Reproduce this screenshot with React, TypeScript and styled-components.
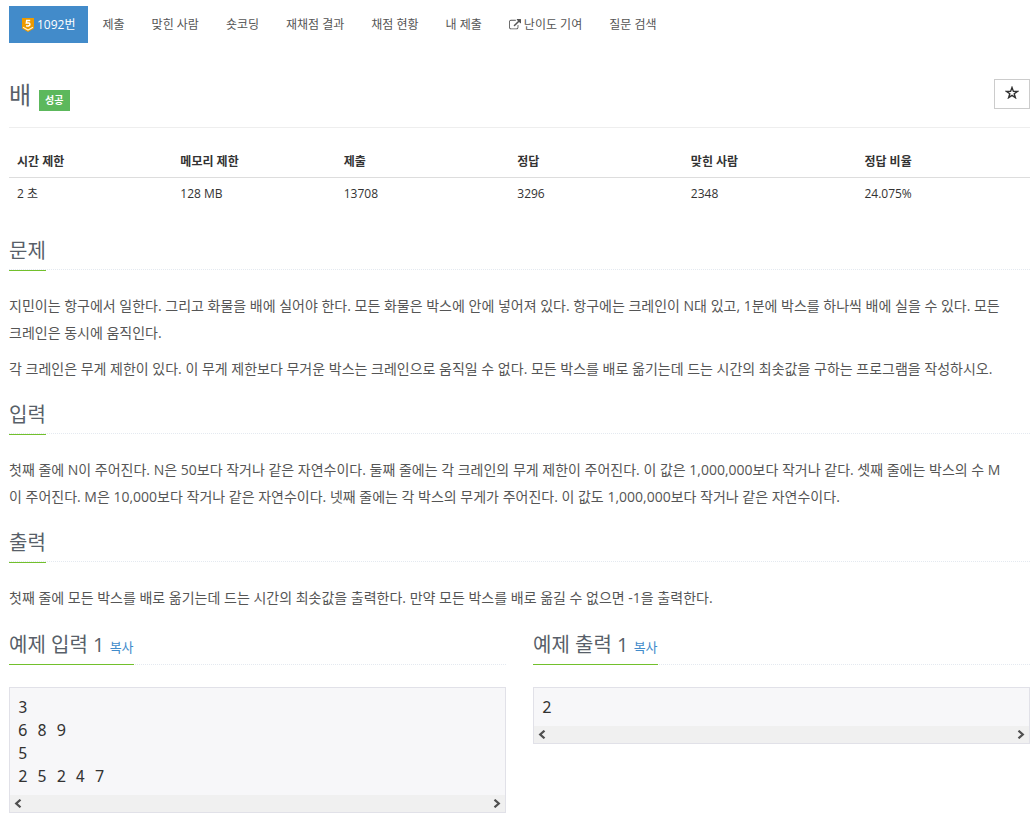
import React from "react";
import styled, { createGlobalStyle } from "styled-components";

const GlobalStyle = createGlobalStyle`
  *, *::before, *::after { box-sizing: border-box; }
  body {
    margin: 0;
    background: #fff;
    color: #333;
    font-family: "Open Sans", "Noto Sans CJK KR", sans-serif;
    font-size: 12px;
    line-height: 17px;
  }
`;

const Page = styled.main`
  padding: 6px 5px 6px 9px;
`;

const Nav = styled.nav`
  display: flex;
  flex-wrap: wrap;
  gap: 2px;
`;

const NavLink = styled.a<{ $active?: boolean }>`
  display: flex;
  align-items: center;
  gap: 3px;
  padding: 10px 12px 10px 13px;
  line-height: 17px;
  text-decoration: none;
  color: ${(p) => (p.$active ? "#fff" : "#555")};
  background: ${(p) => (p.$active ? "#428bca" : "transparent")};
`;

const TitleBar = styled.header`
  display: flex;
  justify-content: space-between;
  align-items: flex-start;
  margin-top: 33px;
  padding-bottom: 14px;
  border-bottom: 1px solid #eee;
`;

const TitleGroup = styled.div`
  display: flex;
  align-items: flex-end;
  gap: 8px;
`;

const Title = styled.h1`
  margin: 0;
  font-size: 24px;
  line-height: 37px;
  font-weight: 400;
  color: #585f69;
`;

const StatusLabel = styled.span`
  margin-bottom: 2px;
  padding: 2px 6px;
  background: #5cb85c;
  color: #fff;
  font-size: 10px;
  line-height: 17px;
  font-weight: 700;
`;

const StarButton = styled.button`
  display: flex;
  align-items: center;
  justify-content: center;
  width: 36px;
  height: 30px;
  margin-top: 3px;
  padding: 0 0 4px;
  border: 1px solid #ccc;
  background: #fff;
  cursor: pointer;
`;

const InfoTable = styled.table`
  width: 100%;
  margin-top: 17px;
  border-collapse: collapse;
  table-layout: fixed;
`;

const HeadCell = styled.th<{ $width: number }>`
  width: ${(p) => p.$width}%;
  padding: 9px 8px 7px;
  border-bottom: 1px solid #ddd;
  line-height: 16px;
  font-size: 12px;
  font-weight: 700;
  text-align: left;
`;

const Cell = styled.td`
  padding: 8px;
  line-height: 16px;
`;

const Section = styled.section<{ $space?: number }>`
  margin-top: ${(p) => p.$space ?? 18}px;
  min-width: 0;
`;

const Headline = styled.div<{ $overlap?: number }>`
  display: flex;
  margin-bottom: 22px;
  border-bottom: 1px dotted #e4e9f0;

  h2 {
    margin: 0 0 -${(p) => p.$overlap ?? 2}px;
    padding-bottom: 4px;
    border-bottom: 1px solid #72c02c;
    font-size: 20px;
    line-height: 30px;
    font-weight: 400;
    color: #585f69;
  }
`;

const CopyLink = styled.a`
  font-size: 13px;
  line-height: 17px;
  color: #428bca;
  text-decoration: none;
`;

const Text = styled.p`
  margin: 0;
  padding-right: 22px;
  font-size: 14px;
  line-height: 27px;
  color: #555;

  & + & {
    margin-top: 9px;
  }
`;

const Samples = styled.div`
  display: grid;
  grid-template-columns: 1fr 1fr;
  align-items: start;
  gap: 27px;
`;

const SampleBox = styled.div`
  border: 1px solid #e1e1e8;
  background: #f7f7f9;
`;

const SampleData = styled.pre`
  margin: 0;
  padding: 8px 8px 7px;
  font-family: "Noto Sans Mono", "DejaVu Sans Mono", monospace;
  font-size: 16px;
  line-height: 23px;
  color: #333;
`;

const ScrollTrack = styled.div`
  display: flex;
  justify-content: space-between;
  align-items: center;
  height: 17px;
  padding: 0 4px;
  background: #f0f0f0;
`;

const TierIcon = () => (
  <svg width="12" height="15" viewBox="0 0 12 15" aria-hidden="true">
    <path d="M0 1h12v10.500L6 15l-6-3.500z" fill="#ec9a00" />
    <path d="M1 10.300l5 2.700 5-2.700" fill="none" stroke="#fff3d0" strokeWidth="1.100" />
    <path d="M8.200 3.500H4.700L4.400 6.100q3.500-.7 3.500 1.300 0 2-3.800 1.300" fill="none" stroke="#fff" strokeWidth="1.500" />
  </svg>
);

const ExternalIcon = () => (
  <svg width="12" height="12" viewBox="0 0 1792 1792" fill="currentColor" aria-hidden="true">
    <path d="M1408 928v320q0 119-84.5 203.5t-203.5 84.5h-832q-119 0-203.5-84.5t-84.5-203.5v-832q0-119 84.5-203.5t203.5-84.5h704q14 0 23 9t9 23v64q0 14-9 23t-23 9h-704q-66 0-113 47t-47 113v832q0 66 47 113t113 47h832q66 0 113-47t47-113v-320q0-14 9-23t23-9h64q14 0 23 9t9 23zm384-864v512q0 26-19 45t-45 19-45-19l-176-176-652 652q-10 10-23 10t-23-10l-114-114q-10-10-10-23t10-23l652-652-176-176q-19-19-19-45t19-45 45-19h512q26 0 45 19t19 45z" />
  </svg>
);

const StarIcon = () => (
  <svg width="14" height="13" viewBox="0 0 14 13" aria-hidden="true">
    <path
      d="M7 1.500l1.400 3.900h4.100L9.200 7.800l1.200 3.900L7 9.400l-3.400 2.300 1.200-3.900L1.500 5.400h4.100z"
      fill="none"
      stroke="#333"
      strokeWidth="1.400"
    />
  </svg>
);

const Arrow = ({ right }: { right?: boolean }) => (
  <svg width="8" height="9" viewBox="0 0 8 9" aria-hidden="true">
    <path
      d={right ? "M1.500.700L5.800 4.500 1.500 8.300" : "M6.500.700L2.200 4.500 6.500 8.300"}
      fill="none"
      stroke="#505050"
      strokeWidth="2.200"
    />
  </svg>
);

const navItems: { label: string; active?: boolean; icon?: React.ReactNode }[] = [
  { label: "1092번", active: true, icon: <TierIcon /> },
  { label: "제출" },
  { label: "맞힌 사람" },
  { label: "숏코딩" },
  { label: "재채점 결과" },
  { label: "채점 현황" },
  { label: "내 제출" },
  { label: "난이도 기여", icon: <ExternalIcon /> },
  { label: "질문 검색" },
];

const info = [
  { head: "시간 제한", value: "2 초", width: 16 },
  { head: "메모리 제한", value: "128 MB", width: 16 },
  { head: "제출", value: "13708", width: 17 },
  { head: "정답", value: "3296", width: 17 },
  { head: "맞힌 사람", value: "2348", width: 17 },
  { head: "정답 비율", value: "24.075%", width: 17 },
];

const sections = [
  {
    title: "문제",
    paragraphs: [
      "지민이는 항구에서 일한다. 그리고 화물을 배에 실어야 한다. 모든 화물은 박스에 안에 넣어져 있다. 항구에는 크레인이 N대 있고, 1분에 박스를 하나씩 배에 실을 수 있다. 모든 크레인은 동시에 움직인다.",
      "각 크레인은 무게 제한이 있다. 이 무게 제한보다 무거운 박스는 크레인으로 움직일 수 없다. 모든 박스를 배로 옮기는데 드는 시간의 최솟값을 구하는 프로그램을 작성하시오.",
    ],
  },
  {
    title: "입력",
    paragraphs: [
      "첫째 줄에 N이 주어진다. N은 50보다 작거나 같은 자연수이다. 둘째 줄에는 각 크레인의 무게 제한이 주어진다. 이 값은 1,000,000보다 작거나 같다. 셋째 줄에는 박스의 수 M이 주어진다. M은 10,000보다 작거나 같은 자연수이다. 넷째 줄에는 각 박스의 무게가 주어진다. 이 값도 1,000,000보다 작거나 같은 자연수이다.",
    ],
  },
  {
    title: "출력",
    paragraphs: [
      "첫째 줄에 모든 박스를 배로 옮기는데 드는 시간의 최솟값을 출력한다. 만약 모든 박스를 배로 옮길 수 없으면 -1을 출력한다.",
    ],
  },
];

const samples = [
  { title: "예제 입력 1", data: "3\n6 8 9\n5\n2 5 2 4 7" },
  { title: "예제 출력 1", data: "2" },
];

export default function App() {
  return (
    <Page>
      <GlobalStyle />
      <Nav>
        {navItems.map((item) => (
          <NavLink key={item.label} href="#" $active={item.active}>
            {item.icon}
            {item.label}
          </NavLink>
        ))}
      </Nav>

      <TitleBar>
        <TitleGroup>
          <Title>배</Title>
          <StatusLabel>성공</StatusLabel>
        </TitleGroup>
        <StarButton type="button" aria-label="즐겨찾기">
          <StarIcon />
        </StarButton>
      </TitleBar>

      <InfoTable>
        <thead>
          <tr>
            {info.map((c) => (
              <HeadCell key={c.head} $width={c.width}>
                {c.head}
              </HeadCell>
            ))}
          </tr>
        </thead>
        <tbody>
          <tr>
            {info.map((c) => (
              <Cell key={c.head}>{c.value}</Cell>
            ))}
          </tr>
        </tbody>
      </InfoTable>

      {sections.map((s, i) => (
        <Section key={s.title} $space={i === 0 ? 26 : 18}>
          <Headline>
            <h2>{s.title}</h2>
          </Headline>
          {s.paragraphs.map((p) => (
            <Text key={p}>{p}</Text>
          ))}
        </Section>
      ))}

      <Samples>
        {samples.map((s) => (
          <Section key={s.title} $space={19}>
            <Headline $overlap={1}>
              <h2>
                {s.title} <CopyLink href="#">복사</CopyLink>
              </h2>
            </Headline>
            <SampleBox>
              <SampleData>{s.data}</SampleData>
              <ScrollTrack>
                <Arrow />
                <Arrow right />
              </ScrollTrack>
            </SampleBox>
          </Section>
        ))}
      </Samples>
    </Page>
  );
}
